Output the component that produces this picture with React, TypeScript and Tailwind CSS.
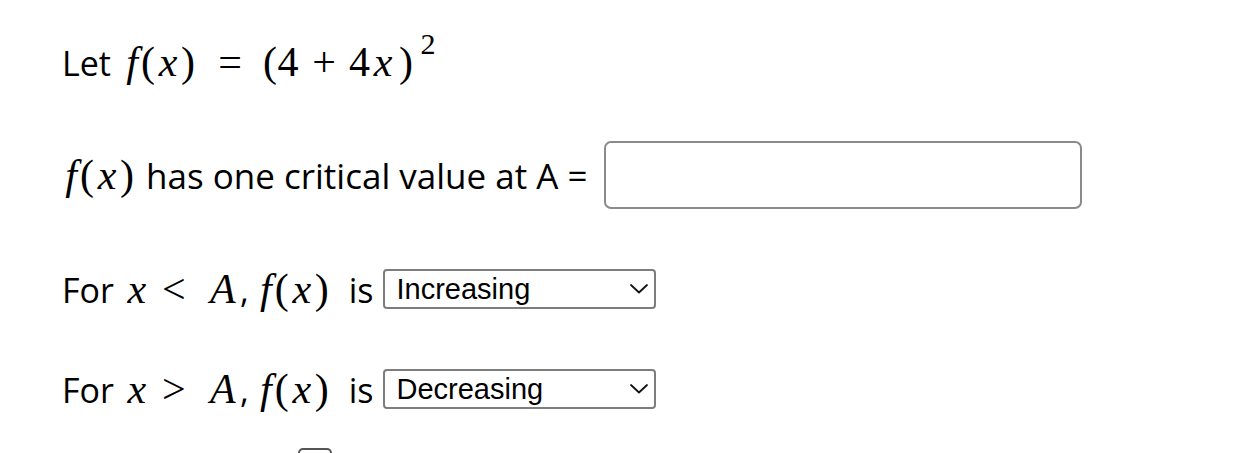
import React from "react";

const sans = { fontFamily: '"Open Sans", "Noto Sans", sans-serif' };
const serif = { fontFamily: '"Liberation Serif", "DejaVu Serif", serif' };

function G({
  children,
  w,
  i,
}: {
  children: React.ReactNode;
  w: string;
  i?: boolean;
}) {
  return (
    <span
      className={`inline-block text-center text-[42px] leading-none ${w} ${i ? "italic" : ""}`}
      style={serif}
    >
      {children}
    </span>
  );
}

function Fx() {
  return (
    <span className="whitespace-nowrap">
      <G w="w-[18px]" i>
        f
      </G>
      <G w="w-[14px]">(</G>
      <G w="w-[26px]" i>
        x
      </G>
      <G w="w-[14px]">)</G>
    </span>
  );
}

function Chevron() {
  return (
    <svg width="20" height="12" viewBox="0 0 20 12" fill="none">
      <path
        d="M2 2 L10 9.5 L18 2"
        stroke="#111"
        strokeWidth="1.8"
        strokeLinecap="round"
        strokeLinejoin="round"
      />
    </svg>
  );
}

function Select({ value }: { value: string }) {
  return (
    <div className="flex h-[40px] w-[273px] shrink-0 items-center justify-between rounded-[4px] border-2 border-[#7d7d7d] bg-white pl-[12px] pr-[5px]">
      <span
        className="text-[29px] leading-none text-black"
        style={{ fontFamily: '"Liberation Sans", Arial, sans-serif' }}
      >
        {value}
      </span>
      <Chevron />
    </div>
  );
}

function IneqRow({ op, value }: { op: string; value: string }) {
  return (
    <div className="flex h-[40px] items-center text-[34px]" style={sans}>
      <span className="whitespace-nowrap leading-none">
        <span>For</span>
        <span className="inline-block w-[10px]" />
        <G w="w-[26px]" i>
          x
        </G>
        <span className="inline-block w-[8px]" />
        <G w="w-[32px]">{op}</G>
        <span className="inline-block w-[16px]" />
        <G w="w-[34px]" i>
          A
        </G>
        <span>,</span>
        <span className="inline-block w-[8px]" />
        <Fx />
        <span className="inline-block w-[20px]" />
        <span>is</span>
      </span>
      <div className="ml-[9px]">
        <Select value={value} />
      </div>
    </div>
  );
}

export default function App() {
  return (
    <div className="min-h-[453px] w-[1239px] overflow-hidden bg-white pl-[62px] pt-[22px] text-black">
      {/* Row 1 */}
      <div className="flex h-[80px] items-center text-[34px]" style={sans}>
        <span className="whitespace-nowrap leading-none">
          <span>Let</span>
          <span className="inline-block w-[12px]" />
          <Fx />
          <span className="inline-block w-[20px]" />
          <G w="w-[30px]">=</G>
          <span className="inline-block w-[18px]" />
          <G w="w-[14px]">(</G>
          <G w="w-[22px]">4</G>
          <span className="inline-block w-[10px]" />
          <G w="w-[30px]">+</G>
          <span className="inline-block w-[10px]" />
          <G w="w-[20px]">4</G>
          <G w="w-[28px]" i>
            x
          </G>
          <G w="w-[18px]">)</G>
          <span className="inline-block w-[2px]" />
          <span
            className="relative -top-[22px] inline-block w-[22px] text-center text-[30px] leading-none"
            style={serif}
          >
            2
          </span>
        </span>
      </div>

      {/* Row 2 */}
      <div className="mt-[39px] flex h-[68px] items-center text-[35px]" style={sans}>
        <span className="whitespace-nowrap leading-none">
          <Fx />
          <span className="inline-block w-[12px]" />
          <span>has one critical value at A =</span>
        </span>
        <div className="ml-[16px] h-[68px] w-[478px] shrink-0 rounded-[7px] border-2 border-[#8a8a8a] bg-white" />
      </div>

      {/* Row 3 */}
      <div className="mt-[60px]">
        <IneqRow op="<" value="Increasing" />
      </div>

      {/* Row 4 */}
      <div className="mt-[60px]">
        <IneqRow op=">" value="Decreasing" />
      </div>

      {/* Row 5 (cut off) */}
      <div className="mt-[39px] flex h-[40px] items-start pl-[236px]">
        <div className="h-[40px] w-[34px] rounded-[5px] border-2 border-[#555]" />
      </div>
    </div>
  );
}
